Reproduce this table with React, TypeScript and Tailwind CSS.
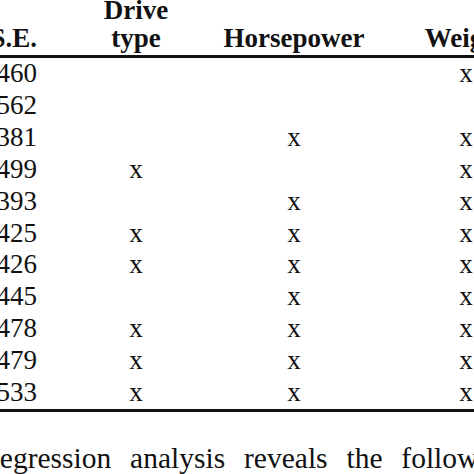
const rows: { se: string; drive: boolean; hp: boolean; weight: boolean }[] = [
  { se: "0.460", drive: false, hp: false, weight: true },
  { se: "0.562", drive: false, hp: false, weight: false },
  { se: "0.381", drive: false, hp: true, weight: true },
  { se: "0.499", drive: true, hp: false, weight: true },
  { se: "0.393", drive: false, hp: true, weight: true },
  { se: "0.425", drive: true, hp: true, weight: true },
  { se: "0.426", drive: true, hp: true, weight: true },
  { se: "0.445", drive: false, hp: true, weight: true },
  { se: "0.478", drive: true, hp: true, weight: true },
  { se: "0.479", drive: true, hp: true, weight: true },
  { se: "0.533", drive: true, hp: true, weight: true },
];

const cols = "grid grid-cols-[77px_198px_118px_226px]";

function Mark({ on }: { on: boolean }) {
  return <div className="flex justify-center whitespace-nowrap">{on ? "x" : ""}</div>;
}

export default function App() {
  return (
    <div className="h-[474px] w-[474px] overflow-hidden bg-white font-['Liberation_Serif','Times_New_Roman',serif] text-[#111]">
      <div className="ml-[-40px] mt-[-4px] w-[619px]">
        {/* header */}
        <div className={`${cols} items-end border-b-[3px] border-[#111] pb-[3px] text-[27px] font-bold leading-[28px]`}>
          <div className="whitespace-nowrap text-right">S.E.</div>
          <div className="flex justify-center text-center">
            Drive
            <br />
            type
          </div>
          <div className="flex justify-center whitespace-nowrap">Horsepower</div>
          <div className="flex justify-center whitespace-nowrap">Weight</div>
        </div>

        {/* body */}
        <div className="border-b-[3px] border-[#111] text-[27px] leading-[31.9px]">
          {rows.map((r) => (
            <div key={r.se} className={cols}>
              <div className="whitespace-nowrap text-right">{r.se}</div>
              <Mark on={r.drive} />
              <Mark on={r.hp} />
              <Mark on={r.weight} />
            </div>
          ))}
        </div>
      </div>

      <p className="ml-[-10px] mt-[28px] whitespace-nowrap text-[29.5px] leading-[36px] [word-spacing:11.5px]">
        regression analysis reveals the following
      </p>
    </div>
  );
}
